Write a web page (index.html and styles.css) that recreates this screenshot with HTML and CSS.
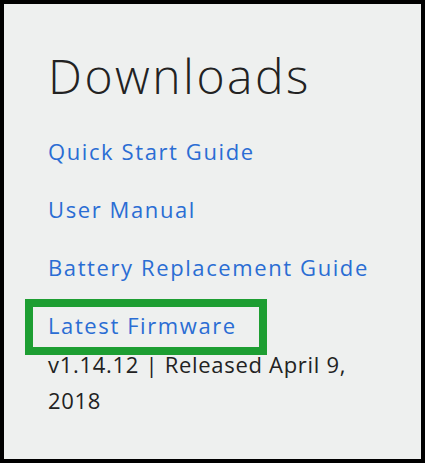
FILE: index.html
```html
<!DOCTYPE html>
<html>
<head>
<meta charset="utf-8">
<link rel="stylesheet" href="styles.css">
</head>
<body>
<div class="frame">
  <h1 class="title">Downloads</h1>
  <ul class="list">
    <li class="item"><a class="link" href="#">Quick Start Guide</a></li>
    <li class="item"><a class="link" href="#">User Manual</a></li>
    <li class="item"><a class="link" href="#">Battery Replacement Guide</a></li>
    <li class="item item-fw">
      <span class="fw-wrap"><a class="link" href="#">Latest Firmware</a><span class="highlight"></span></span>
      <p class="meta">v1.14.12 | Released April 9, 2018</p>
    </li>
  </ul>
</div>
</body>
</html>
```
FILE: styles.css
```css
html, body {
  margin: 0;
  padding: 0;
}
body {
  width: 425px;
  height: 463px;
  overflow: hidden;
  font-family: "Open Sans", "Noto Sans", sans-serif;
}
.frame {
  box-sizing: border-box;
  width: 425px;
  height: 463px;
  border: 4px solid #000;
  background: #eef0ef;
  padding: 0 50px 0 44px;
}
.title {
  margin: 0;
  padding-top: 42px;
  font-size: 48px;
  line-height: 60px;
  font-weight: 300;
  color: #222;
  letter-spacing: 2.5px;
}
.list {
  list-style: none;
  margin: 30px 0 0 0;
  padding: 0;
}
.item {
  font-size: 22px;
  line-height: 30px;
  margin-bottom: 28px;
  letter-spacing: 1.6px;
}
.link {
  color: #2a6dd4;
  text-decoration: none;
}
.fw-wrap {
  position: relative;
  display: inline-block;
}
.highlight {
  position: absolute;
  left: -23px;
  top: -11px;
  width: 242px;
  height: 56px;
  box-sizing: border-box;
  border: 8px solid #1d9e32;
}
.meta {
  margin: 6px 0 0 0;
  color: #222;
  font-size: 22px;
  line-height: 36px;
  letter-spacing: 0.7px;
}
```
